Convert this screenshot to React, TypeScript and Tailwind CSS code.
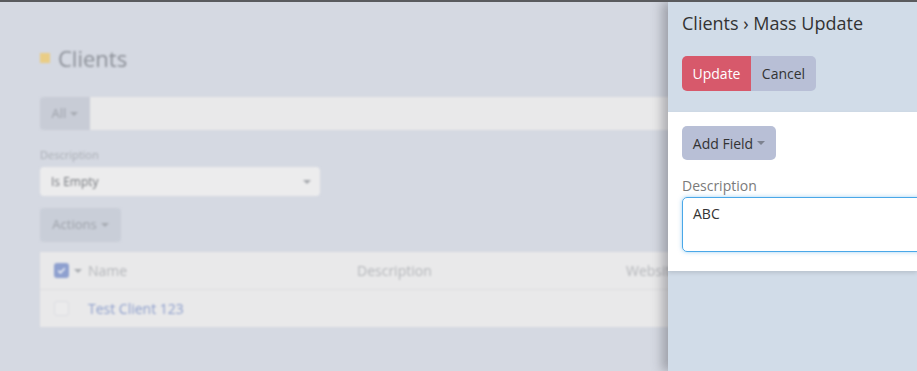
import { useState } from "react";

function Caret({ className }: { className?: string }) {
    return (
        <svg viewBox="0 0 8 4" className={className} width="8" height="4">
            <path d="M0 0h8L4 4z" fill="currentColor" />
        </svg>
    );
}

function ClientsList() {
    return (
        <div className="blur-[1px] pl-10 pt-[41px]">
            <div className="flex items-center gap-2">
                <span className="h-[10px] w-[10px] bg-[#e9cd86]" />
                <h1 className="text-[22px] leading-[30px] text-[#8b8f97]">Clients</h1>
            </div>
            <div className="mt-6 flex h-[33px] w-[700px]">
                <button className="flex w-[50px] items-center justify-center gap-1 rounded-l-[4px] bg-[#c8ccd6] text-[13px] text-[#9ea2aa]">
                    All <Caret className="text-[#a6aab1]" />
                </button>
                <div className="flex-1 bg-[#e9e9ea]" />
            </div>
            <p className="mt-[17px] text-[11px] leading-[15px] text-[#a8acb3]">Description</p>
            <div className="mt-[5px] flex h-[29px] w-[280px] items-center justify-between rounded-[4px] bg-[#ececed] pl-[11px] pr-[9px]">
                <span className="text-[12px] text-[#74777c]">Is Empty</span>
                <Caret className="text-[#a3a6ab]" />
            </div>
            <button className="mt-3 flex h-[34px] w-[81px] items-center justify-center gap-1 rounded-[4px] bg-[#c9ced8] text-[13px] text-[#9ea2aa]">
                Actions <Caret className="text-[#a6aab1]" />
            </button>
            <div className="mt-[10px] w-[700px] bg-[#e9e9ea] text-[14px]">
                <div className="flex h-[38px] items-center border-b border-[#dcdde0] pl-[14px]">
                    <span className="flex h-[15px] w-[15px] items-center justify-center rounded-[3px] bg-[#8ea0cf]">
                        <svg viewBox="0 0 12 12" width="11" height="11">
                            <path d="M2.5 6.2l2.4 2.4 4.7-5" fill="none" stroke="#eef0f6" strokeWidth="1.8" />
                        </svg>
                    </span>
                    <Caret className="ml-[5px] text-[#a8abb0]" />
                    <span className="ml-[6px] w-[269px] text-[#b4b6ba]">Name</span>
                    <span className="w-[269px] text-[#b4b6ba]">Description</span>
                    <span className="text-[#b4b6ba]">Website</span>
                </div>
                <div className="flex h-[37px] items-center pl-[14px]">
                    <span className="h-[15px] w-[15px] rounded-[3px] border border-[#dcdde2] bg-[#ebebec]" />
                    <span className="ml-[19px] text-[#8b9dcb]">Test Client 123</span>
                </div>
            </div>
        </div>
    );
}

function MassUpdatePanel() {
    const [value, setValue] = useState("ABC");
    return (
        <div className="absolute bottom-0 right-0 top-0 flex w-[249px] flex-col overflow-hidden bg-[#d1dce8] shadow-[-6px_0_10px_rgba(60,60,70,0.35)]">
            <div className="px-[14px] pb-[21px] pt-[8px]">
                <h2 className="text-[18px] leading-[27px] text-[#333]">Clients › Mass Update</h2>
                <div className="mt-[19px] flex h-[35px]">
                    <button className="w-[69px] rounded-l-[5px] bg-[#d7596b] text-[14px] text-white">Update</button>
                    <button className="w-[65px] rounded-r-[5px] bg-[#b8bfd6] text-[14px] text-[#333]">Cancel</button>
                </div>
            </div>
            <div className="bg-white px-[14px] pb-[19px] pt-[14px] shadow-[0_2px_4px_rgba(0,0,0,0.12)]">
                <button className="flex h-[34px] w-[94px] items-center justify-center gap-1 rounded-[5px] bg-[#b8bfd6] text-[14px] text-[#333]">
                    Add Field <Caret className="text-[#7d8290]" />
                </button>
                <p className="mt-[16px] text-[14px] leading-[20px] text-[#7a7a7a]">Description</p>
                <textarea
                    value={value}
                    onChange={(e) => setValue(e.target.value)}
                    className="mt-[1px] block h-[55px] w-[260px] resize-none rounded-[5px] border border-[#4aa8e8] px-[10px] py-[5px] text-[14px] text-[#333] shadow-[0_0_4px_rgba(74,168,232,0.5)] outline-none"
                />
            </div>
        </div>
    );
}

export default function App() {
    return (
        <div className="relative h-[371px] w-[917px] overflow-hidden border-t-2 border-[#5a5b5e] bg-[#d5d9e2] font-['Open_Sans',sans-serif]">
            <ClientsList />
            <MassUpdatePanel />
        </div>
    );
}
